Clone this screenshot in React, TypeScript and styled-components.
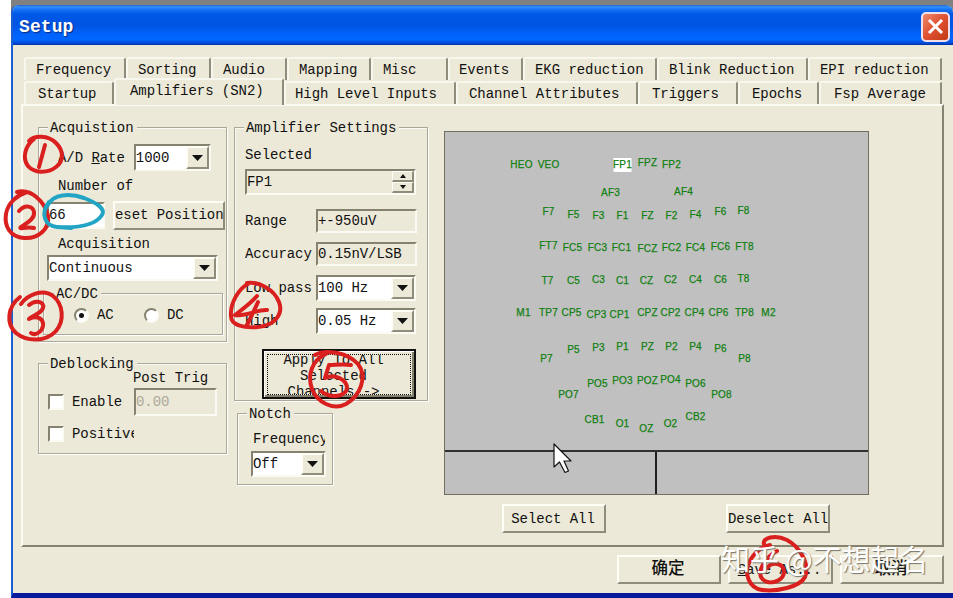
import React from "react";
import styled, { createGlobalStyle, css } from "styled-components";

const face = "#ece9d8";
const shade = "#aca899";
const dark = "#716f64";

const Global = createGlobalStyle`
  *, *::before, *::after { box-sizing: border-box; }
  body { margin: 0; background: #fff; overflow: hidden; }
`;

const Screen = styled.div`
  position: relative;
  width: 953px;
  height: 598px;
  padding-left: 11px;
  background: #fff;
  overflow: hidden;
  color: #111;
  font: 14px/16px "Liberation Mono", "Noto Sans CJK SC", monospace;
  letter-spacing: -0.05px;
  white-space: pre;
`;

const Desktop = styled.div`
  height: 598px;
  padding-top: 5px;
  background: #808080;
`;

const Window = styled.main`
  display: flex;
  flex-direction: column;
  height: 593px;
  border-left: 2px solid #1b5fd0;
  border-bottom: 5px solid #06189b;
  border-radius: 7px 7px 0 0;
  background: ${face};
  overflow: hidden;
`;

const TitleBar = styled.header`
  display: flex;
  flex: none;
  align-items: center;
  justify-content: space-between;
  height: 40px;
  margin-left: -2px;
  padding: 3px 3px 0 8px;
  background: linear-gradient(#2a62c8 0, #3090ff 5%, #1470f4 12%, #0058e6 24%, #0054e3 50%, #0062fb 72%, #0066ff 86%, #0050dc 94%, #0030a8 100%);
`;

const Title = styled.h1`
  margin: 0;
  color: #fff;
  font: bold 18px/20px "Liberation Mono", monospace;
  letter-spacing: 0.1px;
  text-shadow: 1px 1px 1px #0a2a80;
`;

const CloseButton = styled.button`
  display: grid;
  place-items: center;
  width: 29px;
  height: 30px;
  padding: 0;
  border: 2px solid #f1dfe8;
  border-radius: 5px;
  background: linear-gradient(135deg, #ef8a6c, #de5030 50%, #c23a16);
`;

const TabRow = styled.nav<{ $front?: boolean }>`
  display: flex;
  flex: none;
  align-items: flex-end;
  height: ${(p) => (p.$front ? 24 : 23)}px;
  margin: ${(p) => (p.$front ? "0" : "12px")} 0 0 11px;
`;

const Tab = styled.div<{ $w: number; $pad: number; $active?: boolean }>`
  flex: none;
  width: ${(p) => p.$w}px;
  height: ${(p) => (p.$active ? 27 : 23)}px;
  margin-bottom: ${(p) => (p.$active ? -1 : 0)}px;
  padding: 3px 0 0 ${(p) => p.$pad}px;
  border-top: 2px solid #f8f7ee;
  border-left: 2px solid #f8f7ee;
  border-right: 2px solid #8f8c7b;
  border-radius: 3px 3px 0 0;
  background: ${face};
  ${(p) => p.$active && css`position: relative; z-index: 1;`}
`;

const Panel = styled.section`
  display: grid;
  flex: none;
  grid-template-columns: 189px 194px 424px;
  column-gap: 7px;
  align-items: start;
  width: 923px;
  height: 443px;
  margin-left: 8px;
  padding-left: 15px;
  border: solid;
  border-width: 2px;
  border-color: #fbfaf3 #85836f #85836f #fbfaf3;
`;

const Column = styled.div<{ $top: number }>`
  display: flex;
  flex-direction: column;
  align-items: flex-start;
  padding-top: ${(p) => p.$top}px;
`;

const Group = styled.div<{ $w: number; $h: number; $ml?: number; $mt?: number }>`
  flex: none;
  width: ${(p) => p.$w}px;
  height: ${(p) => p.$h}px;
  margin: ${(p) => p.$mt ?? 0}px 0 0 ${(p) => p.$ml ?? 0}px;
  border: 1px solid ${shade};
  box-shadow: 1px 1px 0 #fff, inset 1px 1px 0 #faf9f2;
`;

const Legend = styled.div<{ $ml?: number }>`
  width: fit-content;
  height: 16px;
  margin: -8px 0 0 ${(p) => p.$ml ?? 9}px;
  padding: 0 3px 0 2px;
  background: ${face};
`;

const Line = styled.div<{ $mt?: number; $ml?: number; $h?: number; $gap?: number }>`
  display: flex;
  align-items: center;
  height: ${(p) => p.$h ?? 16}px;
  margin: ${(p) => p.$mt ?? 0}px 0 0 ${(p) => p.$ml ?? 0}px;
  gap: ${(p) => p.$gap ?? 0}px;
`;

const Label = styled.span<{ $w?: number }>`
  flex: none;
  width: ${(p) => (p.$w ? `${p.$w}px` : "auto")};
  overflow: hidden;
`;

const Field = styled.div<{ $w: number; $h: number; $white?: boolean; $off?: boolean }>`
  display: flex;
  flex: none;
  align-items: center;
  justify-content: space-between;
  width: ${(p) => p.$w}px;
  height: ${(p) => p.$h}px;
  padding-left: 0;
  border: 2px solid;
  border-color: #85836f #fbfaf3 #fbfaf3 #85836f;
  background: ${(p) => (p.$white ? "#fff" : face)};
  color: ${(p) => (p.$off ? shade : "#111")};
`;

const raised = css`
  border: 2px solid;
  border-color: #fffef6 #8f8c7b #8f8c7b #fffef6;
  background: ${face};
`;

const Arrow = styled.span`
  display: grid;
  place-items: center;
  width: 23px;
  height: 100%;
  ${raised}
`;

const Spinner = styled.span`
  display: grid;
  grid-template-rows: 1fr 1fr;
  width: 22px;
  height: 100%;
`;

const SpinKey = styled.span`
  display: grid;
  place-items: center;
  ${raised}
  border-width: 1px 2px 2px 1px;
`;

const Button = styled.button<{ $w: number; $h?: number; $cjk?: boolean }>`
  flex: none;
  width: ${(p) => p.$w}px;
  height: ${(p) => p.$h ?? 29}px;
  padding: 0 2px 0 0;
  ${raised}
  color: #111;
  font: inherit;
  ${(p) => p.$cjk && css`font-size: 16.5px; font-weight: 500;`}
  letter-spacing: inherit;
  white-space: pre;
`;

const ApplyButton = styled.button`
  display: block;
  width: 154px;
  height: 50px;
  margin: 15px 0 0 27px;
  padding: 2px 3px;
  border: 2px solid #111;
  background: ${face};
  box-shadow: inset 1px 1px 0 #fff, inset -2px -2px 0 #85836f;
  color: #111;
  font: inherit;
  letter-spacing: inherit;
`;

const FocusBox = styled.span`
  display: block;
  height: 41px;
  padding: 0 11px 0 0;
  border: 1px dotted #111;
  line-height: 16px;
  overflow: hidden;

  & > span { display: block; margin-top: -3px; }
`;

const Check = styled.span`
  flex: none;
  width: 16px;
  height: 16px;
  border: 2px solid;
  border-color: #85836f #fbfaf3 #fbfaf3 #85836f;
  background: #fff;
`;

const Radio = styled.span`
  display: grid;
  place-items: center;
  flex: none;
  width: 15px;
  height: 15px;
  border: 2px solid;
  border-color: #85836f #fbfaf3 #fbfaf3 #85836f;
  border-radius: 50%;
  background: #fff;
`;

const Dot = styled.i`
  width: 5px;
  height: 5px;
  border-radius: 50%;
  background: #111;
`;

const HeadMap = styled.div`
  position: relative;
  display: flex;
  flex-direction: column;
  width: 425px;
  height: 364px;
  border: 1px solid ${dark};
  background: #c0c0c0;
`;

const Scalp = styled.div`
  height: 318px;
`;

const Trays = styled.div`
  display: grid;
  grid-template-columns: 210px 1fr;
  flex: 1;
  border-top: 2px solid #303030;
`;

const Tray = styled.div`
  & + & { border-left: 2px solid #202020; }
`;

const Electrode = styled.span<{ $on?: boolean }>`
  position: absolute;
  transform: translate(-50%, -50%);
  padding: ${(p) => (p.$on ? "1px 0" : "0")};
  background: ${(p) => (p.$on ? "#fff" : "transparent")};
  color: #128012;
  font: 10px/12px "Liberation Sans", sans-serif;
  letter-spacing: 0.2px;
  -webkit-text-stroke: 0.25px #128012;
`;

const Footer = styled.footer`
  display: flex;
  justify-content: flex-end;
  gap: 7px;
  padding: 8px 9px 0 0;
`;

const Overlay = styled.svg`
  position: absolute;
  inset: 0;
  pointer-events: none;
`;

const Watermark = styled.div`
  position: absolute;
  left: 721px;
  top: 540px;
  color: #fff;
  font: 400 29px/36px "Noto Sans CJK SC", sans-serif;
  letter-spacing: -0.1px;
  text-shadow: 1px 1px 1px #77756b;
`;

const backTabs: [string, number, number][] = [
  ["Frequency", 102, 10], ["Sorting", 85, 10], ["Audio", 76, 10], ["Mapping", 84, 10], ["Misc", 77, 10],
  ["Events", 75, 9], ["EKG reduction", 134, 10], ["Blink Reduction", 151, 10], ["EPI reduction", 134, 10],
];

const frontTabs: [string, number, number][] = [
  ["Startup", 90, 12], ["Amplifiers (SN2)", 170, 14], ["High Level Inputs", 172, 9],
  ["Channel Attributes", 182, 11], ["Triggers", 100, 12], ["Epochs", 81, 12], ["Fsp Average", 123, 13],
];

const electrodes: [string, number, number][] = [
  ["HEO", 522, 164], ["VEO", 549, 164], ["FP1", 623, 164], ["FPZ", 648, 162], ["FP2", 672, 164],
  ["AF3", 611, 192], ["AF4", 684, 191],
  ["F7", 549, 211], ["F5", 574, 214], ["F3", 599, 215], ["F1", 623, 215], ["FZ", 648, 215],
  ["F2", 672, 215], ["F4", 696, 214], ["F6", 721, 211], ["F8", 744, 210],
  ["FT7", 549, 245], ["FC5", 573, 247], ["FC3", 598, 247], ["FC1", 622, 247], ["FCZ", 648, 248],
  ["FC2", 672, 247], ["FC4", 696, 247], ["FC6", 721, 246], ["FT8", 745, 246],
  ["T7", 548, 280], ["C5", 574, 280], ["C3", 599, 279], ["C1", 623, 280], ["CZ", 647, 280],
  ["C2", 671, 279], ["C4", 696, 279], ["C6", 721, 279], ["T8", 744, 278],
  ["M1", 524, 312], ["TP7", 549, 312], ["CP5", 572, 312], ["CP3", 597, 314], ["CP1", 620, 314],
  ["CPZ", 648, 312], ["CP2", 671, 312], ["CP4", 695, 312], ["CP6", 719, 312], ["TP8", 745, 312], ["M2", 769, 312],
  ["P7", 547, 358], ["P5", 574, 349], ["P3", 599, 347], ["P1", 623, 346], ["PZ", 648, 346],
  ["P2", 672, 346], ["P4", 696, 346], ["P6", 721, 348], ["P8", 745, 358],
  ["PO7", 569, 394], ["PO5", 598, 383], ["PO3", 623, 380], ["POZ", 648, 380], ["PO4", 671, 379],
  ["PO6", 696, 383], ["PO8", 722, 394],
  ["CB1", 595, 419], ["O1", 623, 423], ["OZ", 647, 428], ["O2", 671, 423], ["CB2", 696, 416],
];

const Down = () => (
  <svg width="11" height="6"><path d="M0 0H11L5.5 6Z" fill="#111" /></svg>
);

const Combo = ({ w, h = 26, children }: { w: number; h?: number; children: string }) => (
  <Field $w={w} $h={h} $white>{children}<Arrow><Down /></Arrow></Field>
);

export default function App() {
  return (
    <Screen>
      <Global />
      <Desktop>
        <Window>
          <TitleBar>
            <Title>Setup</Title>
            <CloseButton aria-label="Close">
              <svg width="19" height="19"><path d="M3 3L16 16M16 3L3 16" stroke="#fff" strokeWidth="3" /></svg>
            </CloseButton>
          </TitleBar>
          <TabRow>
            {backTabs.map(([t, w, p]) => <Tab key={t} $w={w} $pad={p}>{t}</Tab>)}
          </TabRow>
          <TabRow $front>
            {frontTabs.map(([t, w, p], i) => <Tab key={t} $w={w} $pad={p} $active={i === 1}>{t}</Tab>)}
          </TabRow>
          <Panel>
            <Column $top={21}>
              <Group $w={189} $h={215}>
                <Legend>Acquistion</Legend>
                <Line $mt={8} $ml={19} $h={27} $gap={9}>
                  <Label>A/D <u>R</u>ate</Label>
                  <Combo w={77} h={27}>1000</Combo>
                </Line>
                <Line $mt={7} $ml={19}>Number of</Line>
                <Line $mt={7} $ml={8} $h={28} $gap={8}>
                  <Field $w={58} $h={27} $white>66</Field>
                  <Button $w={112} $h={29}>eset Position</Button>
                </Line>
                <Line $mt={7} $ml={19}>Acquisition</Line>
                <Line $mt={3} $ml={8} $h={26}><Combo w={171}>Continuous</Combo></Line>
                <Group $w={180} $h={42} $ml={4} $mt={12}>
                  <Legend $ml={10}>AC/DC</Legend>
                  <Line $mt={5} $ml={30} $gap={8}>
                    <Radio><Dot /></Radio><Label $w={39}>AC</Label>
                    <Radio /><Label>DC</Label>
                  </Line>
                </Group>
              </Group>
              <Group $w={189} $h={91} $mt={21}>
                <Legend>Deblocking</Legend>
                <Line $mt={-2} $ml={94}>Post Trig</Line>
                <Line $mt={2} $ml={9} $h={28}>
                  <Check /><Line $ml={8}><Label $w={62}>Enable</Label></Line>
                  <Field $w={83} $h={28} $off>0.00</Field>
                </Line>
                <Line $mt={10} $ml={9} $gap={8}><Check /><Label $w={62}>Positive</Label></Line>
              </Group>
            </Column>
            <Column $top={21}>
              <Group $w={194} $h={274}>
                <Legend>Amplifier Settings</Legend>
                <Line $mt={11} $ml={10}>Selected</Line>
                <Line $mt={6} $ml={10} $h={26}>
                  <Field $w={171} $h={26}>
                    FP1
                    <Spinner>
                      <SpinKey><svg width="6" height="4"><path d="M0 4L3 0L6 4Z" fill="#111" /></svg></SpinKey>
                      <SpinKey><svg width="6" height="4"><path d="M0 0L3 4L6 0Z" fill="#111" /></svg></SpinKey>
                    </Spinner>
                  </Field>
                </Line>
                <Line $mt={14} $ml={10} $h={24}><Label $w={71}>Range</Label><Field $w={101} $h={24}>+-950uV</Field></Line>
                <Line $mt={9} $ml={10} $h={24}><Label $w={71}>Accuracy</Label><Field $w={101} $h={24}>0.15nV/LSB</Field></Line>
                <Line $mt={9} $ml={10} $h={26}><Label $w={71}>Low pass</Label><Combo w={100}>100 Hz</Combo></Line>
                <Line $mt={7} $ml={10} $h={26}><Label $w={71}>High</Label><Combo w={100}>0.05 Hz</Combo></Line>
                <ApplyButton>
                  <FocusBox><span>{"Apply To All\nSelected\nChannels-->"}</span></FocusBox>
                </ApplyButton>
              </Group>
              <Group $w={96} $h={72} $ml={3} $mt={12}>
                <Legend>Notch</Legend>
                <Line $mt={9} $ml={15}><Label $w={72}>Frequency</Label></Line>
                <Line $mt={4} $ml={13} $h={26}><Combo w={75}>Off</Combo></Line>
              </Group>
            </Column>
            <Column $top={25}>
              <Line $ml={9} $h={364}>
                <HeadMap>
                  <Scalp>
                    {electrodes.map(([name, x, y]) => (
                      <Electrode key={name} $on={name === "FP1"} style={{ left: x - 445.5, top: y - 131 }}>{name}</Electrode>
                    ))}
                  </Scalp>
                  <Trays><Tray /><Tray /></Trays>
                </HeadMap>
              </Line>
              <Line $mt={9} $ml={67} $h={29} $gap={120}>
                <Button $w={104}>Select All</Button>
                <Button $w={104}>Deselect All</Button>
              </Line>
            </Column>
          </Panel>
          <Footer>
            <Button $w={104} $cjk>确定</Button>
            <Button $w={105}><u>S</u>ave As...</Button>
            <Button $w={104} $cjk>取消</Button>
          </Footer>
        </Window>
      </Desktop>

      <Overlay width="953" height="598" viewBox="0 0 953 598" fill="none" strokeLinecap="round" strokeLinejoin="round">
        <path d="M554 444V467L559.5 462L565 472.5L568.5 471L564 461H571Z" fill="#fff" stroke="#111" strokeWidth="1.2" />
        <g stroke="#d9201f" strokeWidth="4">
          <path d="M29 141C34 135 48 135 56 143C64 151 64 161 56 167C47 174 34 173 28 166C22 158 25 146 34 139M45 145L39 167" />
          <path d="M17 192C31 188 45 202 48 216C50 229 38 239 24 238C10 237 4 226 6 214C8 202 18 195 27 192M19 211C25 204 33 206 34 212C35 219 27 223 21 227C18 230 26 226 34 228" />
          <path d="M21 304C27 295 43 288 53 296C63 304 65 320 56 331C46 342 27 342 16 333C6 324 7 307 20 297M29 305C36 299 45 302 43 308C41 314 33 315 29 319C38 315 44 319 43 326C42 332 35 336 31 333" />
          <path d="M247 283C258 281 274 289 279 302C284 315 273 326 258 327C245 328 231 326 231 316C230 304 238 288 250 283M257 296C250 304 240 311 235 315C246 317 258 309 267 310M258 302C255 309 251 317 247 325" />
          <path d="M315 355C325 349 347 352 358 364C368 377 360 396 346 404C333 411 317 402 312 389C307 375 312 360 326 354M351 365C343 364 335 365 329 365L325 378C335 373 346 380 347 387C347 397 330 399 321 391" />
          <path d="M764 544C762 538 775 534 787 540C800 547 810 564 805 577C800 587 776 592 762 590C749 588 744 574 749 563C753 553 763 546 770 545M777 551C766 557 758 569 761 577C766 586 783 583 784 572C784 563 772 561 767 568" />
        </g>
        <path d="M48 205C53 194 70 193 84 198C97 203 106 209 102 215C95 226 76 228 57 227C45 226 40 214 49 202M58 227L71 228" stroke="#22a5c4" strokeWidth="4" />
      </Overlay>
      <Watermark>知乎 @不想起名</Watermark>
    </Screen>
  );
}
